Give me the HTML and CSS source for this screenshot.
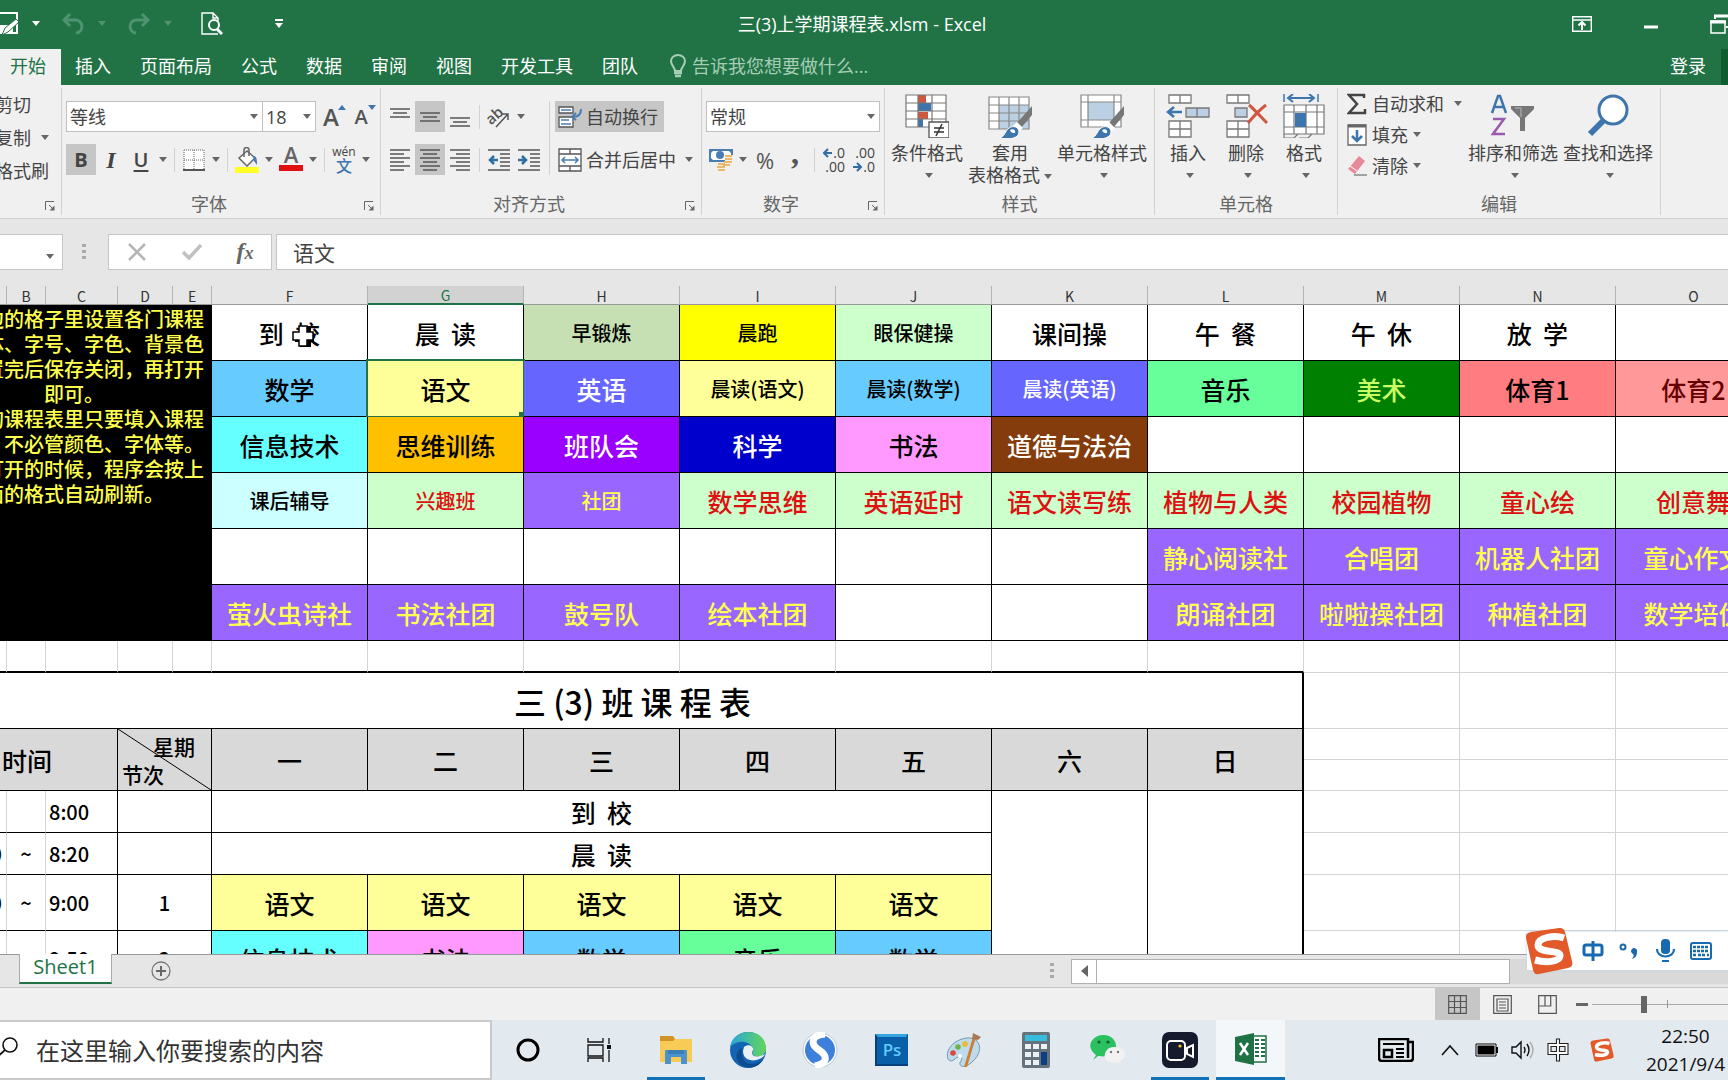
FILE: index.html
```
<!DOCTYPE html>
<html lang="zh-CN">

<head>
    <title>三(3)上学期课程表.xlsm - Excel</title>
    <meta charset="utf-8" />
    <link rel="stylesheet" href="styles.css">
</head>

<body>
    <header class="titlebar">
        <div class="qat">
            <button class="qat-btn qat-save" aria-label="保存"><svg width="30" height="24" viewBox="0 0 30 24"><path d="M1 1h26v20H1z" fill="none" stroke="#fff" stroke-width="2"/><path d="M5 13h18v8H5z" fill="#fff"/><path d="M12 23l3-7 11-9 3 3-11 10z" fill="#fff" stroke="#217346"/></svg></button>
            <i class="caret white"></i>
            <button class="qat-btn qat-undo" aria-label="撤消"><svg width="22" height="22" viewBox="0 0 22 22"><path d="M8 1L2 7l6 6M2 7h11c9 0 9 12 1 13" fill="none" stroke="#4f9370" stroke-width="3"/></svg></button>
            <i class="caret dim"></i>
            <button class="qat-btn qat-undo" aria-label="恢复"><svg width="22" height="22" viewBox="0 0 22 22"><path d="M14 1l6 6-6 6M20 7H9C0 7 0 19 8 20" fill="none" stroke="#4f9370" stroke-width="3"/></svg></button>
            <i class="caret dim"></i>
            <button class="qat-btn qat-preview" aria-label="打印预览"><svg width="22" height="24" viewBox="0 0 22 24"><path d="M17 22H1V1h11l5 5v3M12 1v5h5" fill="none" stroke="#fff" stroke-width="1.4"/><circle cx="13" cy="13" r="5" fill="#217346" stroke="#fff" stroke-width="2"/><path d="M16 17l5 5" stroke="#fff" stroke-width="3"/></svg></button>
            <button class="qat-btn qat-more" aria-label="自定义快速访问工具栏"><i class="caret white"></i></button>
        </div>
        <h1 class="doc-title">三(3)上学期课程表.xlsm - Excel</h1>
        <div class="win-btns">
            <button aria-label="功能区显示选项"><svg width="20" height="16" viewBox="0 0 20 16"><path d="M.7.7h18.6v14.6H.7zM1 4h18" fill="none" stroke="#fff" stroke-width="1.4"/><path d="M10 14V6M6.500 9.500L10 6l3.500 3.500" fill="none" stroke="#fff" stroke-width="2"/></svg></button>
            <button aria-label="最小化"><svg width="16" height="16" viewBox="0 0 16 16"><path d="M1 11h14" stroke="#fff" stroke-width="3"/></svg></button>
            <button aria-label="还原"><svg width="22" height="20" viewBox="0 0 22 20"><path d="M5 5V2h16v11h-5" fill="none" stroke="#fff" stroke-width="2"/><path d="M1 7h14v12H1z" fill="none" stroke="#fff" stroke-width="1.500"/><path d="M4 2h17M0 8h16" stroke="#fff" stroke-width="3"/></svg></button>
        </div>
    </header>

    <nav class="tabs">
        <button class="tab active">开始</button>
        <button class="tab">插入</button>
        <button class="tab">页面布局</button>
        <button class="tab">公式</button>
        <button class="tab">数据</button>
        <button class="tab">审阅</button>
        <button class="tab">视图</button>
        <button class="tab">开发工具</button>
        <button class="tab">团队</button>
        <button class="tell-me"><svg width="16" height="24" viewBox="0 0 16 24"><path d="M5 17c0-4-4-5-4-10a7 6 0 0 1 14 0c0 5-4 6-4 10z" fill="none" stroke="#a6cdb5" stroke-width="2"/><path d="M4 19h8M5 22h6" stroke="#a6cdb5" stroke-width="2.500"/></svg>告诉我您想要做什么...</button>
        <button class="login">登录</button>
        <span class="share"></span>
    </nav>

    <section class="ribbon">
        <div class="group g-clip">
            <div class="clip-list">
                <button>剪切</button>
                <button>复制<i class="caret"></i></button>
                <button>格式刷</button>
            </div>
            <div class="group-label"><svg class="launch"><use href="#launch"/></svg></div>
        </div>

        <div class="group g-font">
            <div class="row">
                <span class="combo font-name"><select aria-label="字体"><option>等线</option></select></span>
                <span class="combo font-size"><select aria-label="字号"><option>18</option></select></span>
                <button class="ib letter">A<i class="tri-up"></i></button>
                <button class="ib letter small">A<i class="tri-down"></i></button>
            </div>
            <div class="row">
                <button class="ib on bold">B</button>
                <button class="ib italic">I</button>
                <button class="ib under">U</button>
                <button class="drop" aria-label="下划线"><i class="caret"></i></button>
                <i class="sep"></i>
                <button class="ib" aria-label="边框"><svg width="22" height="22" viewBox="0 0 22 22"><path d="M1 1h20v20H1z" fill="#fff"/><path d="M1 1h20v19M1 1v19M11 1v19M1 11h20" fill="none" stroke="#666" stroke-dasharray="1 1"/><path d="M0 21h22" stroke="#555" stroke-width="2"/></svg></button>
                <button class="drop" aria-label="边框选项"><i class="caret"></i></button>
                <i class="sep"></i>
                <button class="ib" aria-label="填充颜色"><svg width="24" height="26" viewBox="0 0 24 26"><path d="M4 11L12 4l8 7-8 8z" fill="#fff" stroke="#666" stroke-width="1.500"/><path d="M9 10V3a2.500 2.500 0 0 1 5 0v6" fill="none" stroke="#666" stroke-width="1.500"/><path d="M18 9c4 0 4 4 4 9l-3-4z" fill="#4a7db3"/><path d="M0 20h24v6H0z" fill="#ffff26"/></svg></button>
                <button class="drop" aria-label="填充颜色选项"><i class="caret"></i></button>
                <button class="ib font-color">A</button>
                <button class="drop" aria-label="字体颜色选项"><i class="caret"></i></button>
                <i class="sep"></i>
                <button class="ib pinyin"><span>wén</span><b>文</b></button>
                <button class="drop" aria-label="拼音选项"><i class="caret"></i></button>
            </div>
            <div class="group-label">字体<svg class="launch"><use href="#launch"/></svg></div>
        </div>

        <div class="group g-align">
            <div class="align-cols">
                <div class="align-left">
                    <div class="row">
                        <button class="ib" aria-label="顶端对齐"><svg width="20" height="26"><path d="M0 5h20M3 9h14M0 13h20" stroke="#555" stroke-width="1.300"/></svg></button>
                        <button class="ib on" aria-label="垂直居中"><svg width="20" height="26"><path d="M0 9h20M3 13h14M0 17h20" stroke="#555" stroke-width="1.300"/></svg></button>
                        <button class="ib" aria-label="底端对齐"><svg width="20" height="26"><path d="M0 14h20M3 18h14M0 22h20" stroke="#555" stroke-width="1.300"/></svg></button>
                        <i class="sep"></i>
                        <button class="ib" aria-label="方向"><svg width="24" height="26" viewBox="0 0 24 26"><text x="0" y="17" transform="rotate(-42 8 14)" font-size="15" font-weight="600" font-family="Open Sans" fill="#555">ab</text><path d="M9 23L21 10M15 10h6v6" fill="none" stroke="#555" stroke-width="1.500"/></svg></button>
                        <button class="drop" aria-label="方向选项"><i class="caret"></i></button>
                    </div>
                    <div class="row">
                        <button class="ib" aria-label="左对齐"><svg width="20" height="24"><path d="M0 2h20M0 6h14M0 10h20M0 14h14M0 18h20M0 22h14" stroke="#555" stroke-width="1.300"/></svg></button>
                        <button class="ib on" aria-label="居中"><svg width="20" height="24"><path d="M0 2h20M3 6h14M0 10h20M3 14h14M0 18h20M3 22h14" stroke="#555" stroke-width="1.300"/></svg></button>
                        <button class="ib" aria-label="右对齐"><svg width="20" height="24"><path d="M0 2h20M6 6h14M0 10h20M6 14h14M0 18h20M6 22h14" stroke="#555" stroke-width="1.300"/></svg></button>
                        <i class="sep"></i>
                        <button class="ib" aria-label="减少缩进量"><svg width="22" height="24"><path d="M0 2h22M12 6h10M12 10h10M12 14h10M12 18h10M0 22h22" stroke="#555" stroke-width="1.300"/><path d="M10 12H2M6 8l-4 4 4 4" fill="none" stroke="#2f6ea5" stroke-width="2.500"/></svg></button>
                        <button class="ib" aria-label="增加缩进量"><svg width="22" height="24"><path d="M0 2h22M12 6h10M12 10h10M12 14h10M12 18h10M0 22h22" stroke="#555" stroke-width="1.300"/><path d="M0 12h8M4 8l4 4-4 4" fill="none" stroke="#2f6ea5" stroke-width="2.500"/></svg></button>
                    </div>
                </div>
                <div class="align-right">
                    <div class="row">
                        <button class="tb on"><svg width="24" height="24" viewBox="0 0 24 24"><path d="M1 2h14v6H1zM1 12h14v10H1z" fill="#fff" stroke="#555" stroke-width="1.300"/><path d="M3 5h10M3 15h8M3 19h10" stroke="#4a7db3" stroke-width="1.500"/><path d="M23 4c0 6-3 8-8 8M18 8l-4 4 4 3" fill="none" stroke="#4a7db3" stroke-width="2"/></svg>自动换行</button>
                    </div>
                    <div class="row">
                        <button class="tb"><svg width="24" height="24" viewBox="0 0 24 24"><path d="M1 1h22v22H1zM1 6h22M1 18h22M12 1v5M12 18v5" fill="#fff" stroke="#555" stroke-width="1.300"/><path d="M4 12h16M7 9l-3 3 3 3M17 9l3 3-3 3" fill="none" stroke="#4a7db3" stroke-width="1.500"/></svg>合并后居中</button>
                        <button class="drop" aria-label="合并选项"><i class="caret"></i></button>
                    </div>
                </div>
            </div>
            <div class="group-label">对齐方式<svg class="launch"><use href="#launch"/></svg></div>
        </div>

        <div class="group g-num">
            <div class="row">
                <span class="combo num-format"><select aria-label="数字格式"><option>常规</option></select></span>
            </div>
            <div class="row">
                <button class="ib" aria-label="会计数字格式"><svg width="24" height="24" viewBox="0 0 24 24"><path d="M0 1h24v13H0z" fill="#4a7db3"/><path d="M4 3h16l2 2v5l-2 2H4l-2-2V5z" fill="#fff"/><circle cx="11" cy="7" r="4" fill="#4a7db3"/><path d="M16 7h8v10h-8zM9 14h9v9H9z" fill="#f0f0f0"/><path d="M16 8h7M16 11h7M15 14h8M9 16h7M14 17h7M8 19h8M9 22h7" stroke="#eab868" stroke-width="2"/></svg></button>
                <button class="drop" aria-label="会计格式选项"><i class="caret"></i></button>
                <button class="ib sign">%</button>
                <button class="ib comma">,</button>
                <i class="sep"></i>
                <button class="ib dec"><span><svg width="9" height="10"><path d="M9 5H2M5 1L1 5l4 4" fill="none" stroke="#2f6ea5" stroke-width="2"/></svg>.0</span><span>.00</span></button>
                <button class="ib dec"><span>.00</span><span><svg width="9" height="10"><path d="M0 5h7M4 1l4 4-4 4" fill="none" stroke="#2f6ea5" stroke-width="2"/></svg>.0</span></button>
            </div>
            <div class="group-label">数字<svg class="launch"><use href="#launch"/></svg></div>
        </div>

        <div class="group g-style">
            <div class="bigs">
                <button class="big w76"><svg width="44" height="44" viewBox="0 0 44 44"><path d="M1 1h40v32H1z" fill="#fff"/><path d="M13 1h8v8h-8zM13 18h10v7H13z" fill="#d0573f"/><path d="M13 9h13v8H13zM13 25h5v8h-5z" fill="#3f75ad"/><path d="M1 1h40v32H1zM1 9h40M1 17h40M1 25h40M13 1v32M27 1v32" fill="none" stroke="#777" stroke-width="1.200"/><path d="M24 28h20v16H24z" fill="#fff" stroke="#555" stroke-width="1.300"/><path d="M29 34h10M29 38h10M37 30l-6 12" stroke="#333" stroke-width="1.500"/></svg><span>条件格式</span><i class="caret"></i></button>
                <button class="big w90"><svg width="44" height="44" viewBox="0 0 44 44"><path d="M1 3h40v32H1z" fill="#fff"/><path d="M11 11h30v24H11z" fill="#bcd0e3"/><path d="M1 3h40v32H1zM1 11h40M1 19h40M1 27h40M11 3v32M21 3v32M31 3v32" fill="none" stroke="#888" stroke-width="1.200"/><use href="#brush"/></svg><span>套用</span><span>表格格式<i class="caret"></i></span></button>
                <button class="big w94"><svg width="44" height="44" viewBox="0 0 44 44"><path d="M1 1h40v32H1z" fill="#fff"/><path d="M8 8h26v18H8z" fill="#bcd0e3"/><path d="M1 1h40v32H1zM1 8h40M1 26h40M8 1v32M34 1v32" fill="none" stroke="#888" stroke-width="1.200"/><use href="#brush"/></svg><span>单元格样式</span><i class="caret"></i></button>
            </div>
            <div class="group-label">样式</div>
        </div>

        <div class="group g-cells">
            <div class="bigs">
                <button class="big w58"><svg width="44" height="44" viewBox="0 0 44 44"><path d="M3 1h22v8H3zM14 1v8M3 27h22v16H3zM3 35h22M14 27v16" fill="#fff" stroke="#777" stroke-width="1.300"/><path d="M20 14h23v9H20zM31 14v9" fill="#bcd0e3" stroke="#777" stroke-width="1.300"/><path d="M16 18H3M8 13l-6 5 6 5" fill="none" stroke="#3f75ad" stroke-width="2.500"/></svg><span>插入</span><i class="caret"></i></button>
                <button class="big w58"><svg width="44" height="44" viewBox="0 0 44 44"><path d="M3 1h22v8H3zM14 1v8M3 27h22v16H3zM3 35h22M14 27v16" fill="#fff" stroke="#777" stroke-width="1.300"/><path d="M11 14h12v9H11z" fill="#bcd0e3" stroke="#777" stroke-width="1.300"/><path d="M25 11c6 5 10 10 18 18M42 11C34 17 30 22 24 29" fill="none" stroke="#d0573f" stroke-width="3"/></svg><span>删除</span><i class="caret"></i></button>
                <button class="big w58"><svg width="44" height="44" viewBox="0 0 44 44"><path d="M2 0v8M36 0v8" stroke="#3f75ad" stroke-width="1.500"/><path d="M6 4h26M11 0L6 4l5 4M27 0l5 4-5 4" fill="none" stroke="#3f75ad" stroke-width="2"/><path d="M2 11h40v29H2z" fill="#fff"/><path d="M2 11h40v29H2zM2 18h40M2 33h40M12 11v29M24 11v29M35 11v29M2 40v4h10l4-4M17 44h9l4-4" fill="none" stroke="#777" stroke-width="1.200"/><path d="M13 19h11v14H13z" fill="#3f75ad"/></svg><span>格式</span><i class="caret"></i></button>
            </div>
            <div class="group-label">单元格</div>
        </div>

        <div class="group g-edit">
            <div class="bigs">
                <div class="smalls">
                    <button><svg width="20" height="22" viewBox="0 0 20 22"><path d="M17 5V2H2l8 9-8 9h16v-4" fill="none" stroke="#444" stroke-width="2.500"/></svg>自动求和<i class="caret wide"></i></button>
                    <button><svg width="20" height="22" viewBox="0 0 20 22"><path d="M1 1h18v20H1z" fill="#fff" stroke="#666" stroke-width="1.300"/><path d="M1 2h18" stroke="#666" stroke-width="3"/><path d="M10 6v11M5 12l5 5 5-5" fill="none" stroke="#3f75ad" stroke-width="2.500"/></svg>填充<i class="caret"></i></button>
                    <button><svg width="20" height="22" viewBox="0 0 20 22"><path d="M12 1l6 5-10 13-7-5z" fill="#e8899a"/><path d="M3 11l7 5" stroke="#fff" stroke-width="1"/><path d="M7 20h13" stroke="#555"/></svg>清除<i class="caret"></i></button>
                </div>
                <button class="big w94"><svg width="44" height="44" viewBox="0 0 44 44"><path d="M1 19L7 2h2l6 17M4 13h8" fill="none" stroke="#3f75ad" stroke-width="2.500"/><path d="M2 25h11L2 40h12" fill="none" stroke="#9b59b0" stroke-width="2.500"/><path d="M20 12h23v3l-9 9v13h-5V24l-9-9z" fill="#777"/><path d="M24 14h6v9" fill="none" stroke="#bbb"/></svg><span>排序和筛选</span><i class="caret"></i></button>
                <button class="big w96"><svg width="44" height="44" viewBox="0 0 44 44"><circle cx="27" cy="16" r="14" fill="#fff" stroke="#3f75ad" stroke-width="3"/><path d="M17 27L4 40" stroke="#3f75ad" stroke-width="6"/></svg><span>查找和选择</span><i class="caret"></i></button>
            </div>
            <div class="group-label">编辑</div>
        </div>
    </section>

    <section class="formula-bar">
        <button class="name-box" aria-label="名称框"><i class="caret"></i></button>
        <i class="dots"></i>
        <div class="fx-btns">
            <button aria-label="取消"><svg width="20" height="18"><path d="M2 1l16 16M18 1L2 17" stroke="#b5b5b5" stroke-width="2.500"/></svg></button>
            <button aria-label="输入"><svg width="20" height="18"><path d="M1 9l6 6L19 2" fill="none" stroke="#c0c0c0" stroke-width="3.500"/></svg></button>
            <button class="fx">f<small>x</small></button>
        </div>
        <input class="formula" aria-label="编辑栏" value="语文">
    </section>

    <main class="sheet">
        <table class="grid">
            <colgroup>
                <col class="c-a"><col class="c-b"><col class="c-c"><col class="c-d"><col class="c-b">
                <col><col><col><col><col><col><col><col><col><col>
            </colgroup>
            <thead>
                <tr><th>A</th><th>B</th><th>C</th><th>D</th><th>E</th><th>F</th><th class="sel">G</th><th>H</th><th>I</th><th>J</th><th>K</th><th>L</th><th>M</th><th>N</th><th>O</th></tr>
            </thead>
            <tbody>
                <tr class="r56 set">
                    <td class="note" colspan="5" rowspan="6">在右边的格子里设置各门课程<br>的字体、字号、字色、背景色<br>，设置完后保存关闭，再打开<br>即可。<br>下面的课程表里只要填入课程<br>名称，不必管颜色、字体等。<br>再次打开的时候，程序会按上<br>面的格式自动刷新。</td>
                    <td class="arrive">到  校<svg class="cursor" width="24" height="24" viewBox="0 0 24 24"><path d="M9 4h11v19H9zM4 9h19v9H4z" fill="#000"/><path d="M8 2h8v6h6v8h-6v6H8v-6H2V8h6z" fill="#fff" stroke="#000" stroke-width="1.500"/></svg></td>
                    <td>晨  读</td><td class="exercise">早锻炼</td><td class="run">晨跑</td><td class="eye">眼保健操</td><td>课间操</td><td>午  餐</td><td>午  休</td><td>放  学</td><td></td>
                </tr>
                <tr class="r56 set">
                    <td class="math">数学</td><td class="chinese picked">语文</td><td class="english">英语</td><td class="chinese s">晨读(语文)</td><td class="math s">晨读(数学)</td><td class="english s">晨读(英语)</td><td class="music">音乐</td><td class="art">美术</td><td class="pe1">体育1</td><td class="pe2">体育2</td>
                </tr>
                <tr class="r56 set">
                    <td class="it">信息技术</td><td class="think">思维训练</td><td class="meeting">班队会</td><td class="science">科学</td><td class="calli">书法</td><td class="moral">道德与法治</td><td></td><td></td><td></td><td></td>
                </tr>
                <tr class="r56 set">
                    <td class="tutor">课后辅导</td><td class="hobby s">兴趣班</td><td class="club s">社团</td><td class="hobby">数学思维</td><td class="hobby">英语延时</td><td class="hobby">语文读写练</td><td class="hobby">植物与人类</td><td class="hobby">校园植物</td><td class="hobby">童心绘</td><td class="hobby">创意舞</td>
                </tr>
                <tr class="r56 set">
                    <td></td><td></td><td></td><td></td><td></td><td></td><td class="club">静心阅读社</td><td class="club">合唱团</td><td class="club">机器人社团</td><td class="club">童心作文</td>
                </tr>
                <tr class="r56 set">
                    <td class="club">萤火虫诗社</td><td class="club">书法社团</td><td class="club">鼓号队</td><td class="club">绘本社团</td><td></td><td></td><td class="club">朗诵社团</td><td class="club">啦啦操社团</td><td class="club">种植社团</td><td class="club">数学培优</td>
                </tr>
                <tr class="r32 blank">
                    <td class="tb2"></td><td class="tb2"></td><td class="tb2"></td><td class="tb2"></td><td class="tb2"></td><td class="tb2"></td><td class="tb2"></td><td class="tb2"></td><td class="tb2"></td><td class="tb2"></td><td class="tb2"></td><td class="tb2"></td><td></td><td></td><td></td>
                </tr>
                <tr class="r56">
                    <td class="k end title" colspan="12">三 (3) 班 课 程 表</td><td></td><td></td><td></td>
                </tr>
                <tr class="r31">
                    <td class="k head" colspan="3" rowspan="2">时间</td>
                    <td class="k head corner" colspan="2" rowspan="2"><svg viewBox="0 0 93 61" preserveAspectRatio="none"><path d="M0 0l93 61" stroke="#000" fill="none"/></svg><span class="week">星期</span><span class="lesson">节次</span></td>
                    <td class="k head" rowspan="2">一</td><td class="k head" rowspan="2">二</td><td class="k head" rowspan="2">三</td><td class="k head" rowspan="2">四</td><td class="k head" rowspan="2">五</td><td class="k head" rowspan="2">六</td><td class="k head end" rowspan="2">日</td><td></td><td></td><td></td>
                </tr>
                <tr class="r31"><td></td><td></td><td></td></tr>
                <tr class="r42">
                    <td class="kb"></td><td class="kb"></td><td class="k time">8:00</td><td class="k" colspan="2"></td><td class="k" colspan="5">到  校</td><td class="k" rowspan="4"></td><td class="k end" rowspan="4"></td><td></td><td></td><td></td>
                </tr>
                <tr class="r42">
                    <td class="kb from">8:00</td><td class="kb num">~</td><td class="k time">8:20</td><td class="k" colspan="2"></td><td class="k" colspan="5">晨  读</td><td></td><td></td><td></td>
                </tr>
                <tr class="r56">
                    <td class="kb from">8:20</td><td class="kb num">~</td><td class="k time">9:00</td><td class="k num" colspan="2">1</td><td class="k chinese">语文</td><td class="k chinese">语文</td><td class="k chinese">语文</td><td class="k chinese">语文</td><td class="k chinese">语文</td><td></td><td></td><td></td>
                </tr>
                <tr class="r56">
                    <td class="kb from">9:10</td><td class="kb num">~</td><td class="k time">9:50</td><td class="k num" colspan="2">2</td><td class="k it">信息技术</td><td class="k calli">书法</td><td class="k math">数学</td><td class="k music">音乐</td><td class="k math">数学</td><td></td><td></td><td></td>
                </tr>
            </tbody>
        </table>
    </main>

    <div class="sheet-tabs">
        <button class="sheet-tab">Sheet1</button>
        <button class="add-sheet" aria-label="新工作表"><svg width="20" height="20"><circle cx="10" cy="10" r="9" fill="none" stroke="#777" stroke-width="1.300"/><path d="M10 5v10M5 10h10" stroke="#666" stroke-width="2"/></svg></button>
        <div class="hscroll">
            <i class="dots"></i>
            <button class="scroll-left" aria-label="向左滚动"><i></i></button>
            <div class="scroll-thumb"></div>
            <div class="scroll-track"></div>
        </div>
        <div class="ime">
            <svg class="ime-logo" width="48" height="48" viewBox="0 0 48 48"><path d="M6 5L34 1c4 0 5 1 6 4l7 29c1 4 0 6-4 7l-29 6c-4 1-5-1-6-4L1 11c0-4 1-5 5-6z" fill="#e25a29"/><path d="M39 11c-9-3-26-1-26 7 0 9 23 4 22 11-1 6-14 7-25 4" fill="none" stroke="#fff" stroke-width="7"/></svg>
            <button aria-label="中文输入"><svg width="22" height="22" viewBox="0 0 22 22"><rect x="2" y="5" width="18" height="10" rx="2" fill="none" stroke="#1769b0" stroke-width="3"/><path d="M11 1v20" stroke="#1769b0" stroke-width="3"/></svg></button>
            <button aria-label="中文标点"><svg width="22" height="22" viewBox="0 0 22 22"><circle cx="5" cy="7" r="2.500" fill="none" stroke="#1769b0" stroke-width="2"/><path d="M14 9a3 3 0 0 1 5 3c0 4-2 6-5 7 2-3 2-4 1-5a3 3 0 0 1-1-5z" fill="#1769b0"/></svg></button>
            <button aria-label="语音输入"><svg width="22" height="24" viewBox="0 0 22 24"><rect x="7" y="0" width="9" height="15" rx="4" fill="#1769b0"/><path d="M3 10c0 10 17 10 17 0" fill="none" stroke="#1769b0" stroke-width="2"/><path d="M8 22h7" stroke="#1769b0" stroke-width="2"/></svg></button>
            <button aria-label="软键盘"><svg width="22" height="18" viewBox="0 0 22 18"><rect x="1" y="1" width="20" height="16" rx="2" fill="none" stroke="#1769b0" stroke-width="2"/><path d="M3 5h16M3 9h16M3 13h3M8 13h7M17 13h2" stroke="#1769b0" stroke-width="2.500" stroke-dasharray="3 1"/></svg></button>
        </div>
    </div>

    <footer class="status">
        <button class="view on" aria-label="普通"><svg width="19" height="19"><path d="M.7.7h17.600v17.600H.7zM.7 6.500h17.600M.7 12.500h17.600M6.500.7v17.600M12.500.7v17.600" fill="none" stroke="#555" stroke-width="1.200"/></svg></button>
        <button class="view" aria-label="页面布局"><svg width="19" height="19"><path d="M.7.7h17.600v17.600H.7zM4 4h11v12H4zM6 7h7M6 10h7M6 13h7" fill="none" stroke="#555" stroke-width="1.200"/></svg></button>
        <button class="view" aria-label="分页预览"><svg width="19" height="19"><path d="M.7.7h17.600v17.600H.7zM.7 11h12V.7M7 .7V11" fill="none" stroke="#555" stroke-width="1.200"/></svg></button>
        <button class="zoom-out" aria-label="缩小"></button>
        <input class="zoom-range" type="range" aria-label="缩放" min="0" max="100" value="34">
    </footer>

    <div class="taskbar">
        <label class="search"><svg width="24" height="22" viewBox="0 0 24 22"><circle cx="15" cy="8" r="7" fill="none" stroke="#111" stroke-width="1.600"/><path d="M10 13l-9 8" stroke="#111" stroke-width="1.800"/></svg><input type="text" placeholder="在这里输入你要搜索的内容"></label>
        <button class="app" aria-label="Cortana"><svg width="24" height="24"><circle cx="12" cy="12" r="10" fill="none" stroke="#000" stroke-width="3"/></svg></button>
        <button class="app view-task" aria-label="任务视图"><svg width="26" height="24" viewBox="0 0 26 24"><path d="M1 0v4h15V0M1 7h15v11H1zM1 24v-4h15v4M22 0v6M22 12v12" fill="none" stroke="#111" stroke-width="1.300"/><path d="M20 7h4v4h-4z" fill="#111"/></svg></button>
        <button class="app open" aria-label="文件资源管理器"><svg width="34" height="30" viewBox="0 0 34 30"><path d="M1 2h12l3 2h17v23H1z" fill="#f8cb56"/><path d="M1 1h13l2 3-2 2H1z" fill="#d29322"/><path d="M6 29V16q0-1 1-1h20q1 0 1 1v13h-6v-7H12v7z" fill="#4b93cc"/><path d="M9 15h16v4H9z" fill="#3b7db5"/></svg></button>
        <button class="app" aria-label="Edge"><svg width="36" height="36" viewBox="0 0 36 36"><defs><linearGradient id="eg" x1="0" x2="1"><stop offset="0" stop-color="#2aa5dc"/><stop offset="1" stop-color="#63d65a"/></linearGradient></defs><circle cx="18" cy="18" r="18" fill="#1464b4"/><path d="M0 16C2-5 36-6 36 17c0 7-9 9-13 6-2-2 1-4 0-6-3-10-19-9-23-1z" fill="url(#eg)"/><path d="M12 20c0 14 12 14 21 8-6 9-18 10-24 3-5-6-2-13 3-15z" fill="#0d4c8f"/><path d="M14 15c5-4 10 0 9 3-1 2-2 4 1 6 4 1 8 0 11-2-3 8-22 10-22-3z" fill="#e8f0f6"/></svg></button>
        <button class="app" aria-label="搜狗浏览器"><svg width="36" height="36" viewBox="0 0 36 36"><circle cx="18" cy="18" r="17" fill="#fff" stroke="#bcc8d4"/><circle cx="18" cy="18" r="15" fill="#3f7fdc"/><path d="M23 2C9 3 8 12 17 18s9 13-4 16" fill="none" stroke="#fff" stroke-width="7"/></svg></button>
        <button class="app" aria-label="Photoshop"><svg width="34" height="34" viewBox="0 0 34 34"><path d="M0 1h33v32H0z" fill="#07417d"/><path d="M2 3h31v28H2z" fill="#0960a8"/><path d="M0 1h33l-2 3H3z" fill="#35a4dd"/><text x="17" y="23" text-anchor="middle" font-family="Open Sans" font-weight="600" font-size="17" fill="#62c9fb">Ps</text></svg></button>
        <button class="app" aria-label="画图"><svg width="36" height="36" viewBox="0 0 36 36"><path d="M2 27C-3 12 22 0 31 9c6 7 1 18-9 24-7 4-10-1-7-4 3-4-2-6-6-2-3 3-6 2-7 0z" fill="#bcdcee" stroke="#7897ab"/><circle cx="7" cy="21" r="2.800" fill="#d84a42"/><circle cx="12" cy="15" r="2.800" fill="#70b348"/><circle cx="19" cy="12" r="3" fill="#edba3d"/><circle cx="14" cy="24" r="2" fill="#fff"/><path d="M30 5l-9 30-3 0L27 5z" fill="#d27d35"/><path d="M27 1l8 4-3 3-6-1z" fill="#aa7955"/></svg></button>
        <button class="app" aria-label="计算器"><svg width="28" height="36" viewBox="0 0 28 36"><rect width="28" height="36" rx="2" fill="#66727c"/><path d="M3 3h22v6H3z" fill="#35bddb"/><path d="M3 12h6v5H3zM11 12h6v5h-6zM19 12h6v5h-6zM3 20h6v5H3zM11 20h6v5h-6zM3 28h6v5H3zM11 28h6v5h-6z" fill="#eef2f5"/><path d="M19 20h6v13h-6z" fill="#0b3f83"/></svg></button>
        <button class="app" aria-label="微信"><svg width="36" height="32" viewBox="0 0 36 32"><path d="M3 26l3-5C-7 11 5 0 14 1c13 0 18 18 2 21-4 1-6 0-8 0z" fill="#2bc160"/><path d="M31 30l-3-2c-18 4-16-15-4-15 13 0 14 10 6 14z" fill="#f2f2f2"/><circle cx="9" cy="8" r="1.600" fill="#115e2c"/><circle cx="18" cy="8" r="1.600" fill="#115e2c"/><circle cx="21" cy="18" r="1.200" fill="#777"/><circle cx="28" cy="18" r="1.200" fill="#777"/></svg></button>
        <button class="app open" aria-label="录屏"><svg width="36" height="36" viewBox="0 0 36 36"><rect width="36" height="36" rx="7" fill="#151a2c"/><rect x="5" y="9" width="18" height="19" rx="4" fill="none" stroke="#fff" stroke-width="2"/><path d="M25 16l6-3v12l-6-3z" fill="none" stroke="#fff" stroke-width="2"/><circle cx="18" cy="14" r="1.600" fill="#ffc327"/></svg></button>
        <button class="app current" aria-label="Excel"><svg width="32" height="32" viewBox="0 0 32 32"><path d="M18 3h13v26H18z" fill="#fff" stroke="#1f7244" stroke-width="1.500"/><path d="M20 7h4M26 7h4M20 11h4M26 11h4M20 15h4M26 15h4M20 19h4M26 19h4M20 23h4M26 23h4" stroke="#1f7244" stroke-width="2"/><path d="M0 4L19 0v32L0 28z" fill="#1f7244"/><path d="M5 10l8 12M13 10L5 22" stroke="#fff" stroke-width="2.500"/></svg></button>
        <div class="tray">
            <svg width="36" height="24" viewBox="0 0 36 24"><path d="M30 4h5v16q0 3-3 3H4q-3 0-3-3V1h29v19" fill="none" stroke="#000" stroke-width="2.500"/><path d="M5 6h21M18 11h8M18 15h8M18 19h8" stroke="#000" stroke-width="2"/><path d="M6 12h8v7H6z" fill="none" stroke="#000" stroke-width="2.500"/></svg>
            <svg class="chev" width="18" height="12"><path d="M1 11l8-9 8 9" fill="none" stroke="#111" stroke-width="1.600"/></svg>
            <svg width="24" height="14"><path d="M1 1h20v12H1z" fill="#fff" stroke="#000"/><path d="M2.500 2.500h17v9h-17zM21 4h2v6h-2z"/></svg>
            <svg width="24" height="20" viewBox="0 0 24 20"><path d="M1 7h4l5-5v16l-5-5H1z" fill="none" stroke="#111" stroke-width="1.400"/><path d="M13 7q2 3 0 6M16 4q4 6 0 12" fill="none" stroke="#111" stroke-width="1.400"/><path d="M19 2q6 8 0 16" fill="none" stroke="#aaa" stroke-width="1.400"/></svg>
            <svg width="22" height="24" viewBox="0 0 22 24"><path d="M9.500 1h3v4.500H21v11h-8.500V23h-3v-6.500H1v-11h8.500zM4 8.500v5h5.500v-5zM12.500 8.500v5H18v-5z" fill="#fff" stroke="#222" stroke-width="1.100"/></svg>
            <svg class="tray-ime" width="24" height="24" viewBox="0 0 48 48"><path d="M6 5L34 1c4 0 5 1 6 4l7 29c1 4 0 6-4 7l-29 6c-4 1-5-1-6-4L1 11c0-4 1-5 5-6z" fill="#e25a29"/><path d="M39 11c-9-3-26-1-26 7 0 9 23 4 22 11-1 6-14 7-25 4" fill="none" stroke="#fff" stroke-width="7"/></svg>
            <div class="clock"><time>22:50</time><time>2021/9/4</time></div>
        </div>
    </div>

    <svg class="defs" aria-hidden="true">
        <symbol id="launch" viewBox="0 0 10 10"><path d="M.5 9V.5H9M4 4l4 4" fill="none" stroke="#666"/><path d="M9.500 4.500v5h-5z" fill="#666"/></symbol>
        <g id="brush"><path d="M44 12v9L33 34l-5-4z" fill="#777"/><path d="M29 28l6 6-4 4-6-6z" fill="#fff"/><path d="M12 44c5-2 5-7 9-10 4-3 10-1 10 4 0 7-12 8-19 6z" fill="#3f75ad" stroke="#fff"/><path d="M22 36c3-2 6 0 5 3-2 0-4 0-5-3z" fill="#fff"/></g>
    </svg>
</body>

</html>
```
FILE: styles.css
```
* {
    box-sizing: border-box;
}
body {
    margin: 0;
    height: 100vh;
    overflow: hidden;
    display: flex;
    flex-direction: column;
    background-color: #e6e6e6;
    color: #444;
    font-family: "Open Sans", "Noto Sans CJK SC", sans-serif;
    font-size: 18px;
    line-height: 22px;
}
button, input, select {
    font: inherit;
    color: inherit;
    border: 0;
    padding: 0;
    margin: 0;
    background: none;
}
button {
    white-space: nowrap;
}
svg {
    display: block;
    flex: none;
}
.defs {
    position: absolute;
    width: 0;
    height: 0;
}

/* small drop-down triangle */
.caret {
    display: inline-block;
    flex: none;
    border: 4px solid transparent;
    border-top: 5px solid #666;
    border-bottom: 0;
}
.caret.white {
    border-top-color: #fff;
}
.caret.dim {
    border-top-color: #4f9370;
}
.dots {
    flex: none;
    width: 4px;
    height: 16px;
    background: repeating-linear-gradient(#aaa 0 3px, transparent 3px 6px);
}

/* title bar */
.titlebar {
    position: relative;
    flex: none;
    height: 49px;
    display: flex;
    align-items: center;
    justify-content: space-between;
    padding-bottom: 2px;
    background-color: #217346;
    color: #fff;
}
.qat {
    display: flex;
    align-items: center;
    height: 46px;
}
.qat-save {
    margin-left: -10px;
    margin-right: 12px;
}
.qat-undo {
    margin-left: 22px;
    margin-right: 14px;
}
.qat-preview {
    margin-left: 29px;
    margin-right: 52px;
}
.qat-more {
    display: flex;
    border-top: 2px solid #fff;
    padding-top: 2px;
}
.doc-title {
    position: absolute;
    left: 0;
    right: 4px;
    margin: 0;
    text-align: center;
    font-size: 18px;
    font-weight: 400;
    pointer-events: none;
}
.win-btns {
    display: flex;
    align-items: center;
    gap: 51px;
    margin-right: -4px;
    height: 46px;
}

/* ribbon tabs */
.tabs {
    flex: none;
    height: 36px;
    display: flex;
    align-items: stretch;
    background-color: #217346;
    color: #fff;
}
.tab {
    padding: 0 15px 2px 14px;
}
.tab.active {
    margin-left: -4px;
    background-color: #f0f0f0;
    color: #217346;
}
.tell-me {
    display: flex;
    align-items: center;
    gap: 6px;
    padding: 0 0 2px 17px;
    color: #a6cdb5;
}
.login {
    margin-left: auto;
    padding: 0 15px 2px;
}
.share {
    width: 7px;
    background-color: #0e5c2f;
}

/* ribbon */
.ribbon {
    flex: none;
    display: flex;
    height: 134px;
    padding: 3px 0;
    background-color: #f0f0f0;
    border-bottom: 1px solid #d0d0d0;
}
.group {
    flex: none;
    position: relative;
    display: flex;
    flex-direction: column;
    gap: 12px;
    padding: 13px 0 0 4px;
    border-right: 1px solid #d2d2d2;
}
.g-clip {
    width: 62px;
    padding-left: 0;
}
.g-font {
    width: 319px;
}
.g-align {
    width: 321px;
}
.g-num {
    width: 183px;
}
.g-style {
    width: 270px;
}
.g-cells {
    width: 183px;
}
.g-edit {
    width: 323px;
}
.group-label {
    position: absolute;
    left: 0;
    right: 24px;
    bottom: 0;
    text-align: center;
    color: #666;
}
.g-style .group-label,
.g-cells .group-label,
.g-edit .group-label {
    right: 0;
}
.launch {
    position: absolute;
    right: -18px;
    bottom: 4px;
    width: 10px;
    height: 10px;
}
.row {
    display: flex;
    align-items: center;
    height: 31px;
}
.ib {
    position: relative;
    width: 30px;
    height: 31px;
    display: flex;
    flex: none;
    align-items: center;
    justify-content: center;
}
.drop {
    width: 14px;
    height: 31px;
    display: flex;
    align-items: center;
    justify-content: center;
}
.on {
    background-color: #c6c6c6;
}
.sep {
    width: 1px;
    height: 24px;
    margin: 0 4px;
    background-color: #d2d2d2;
}
.combo {
    position: relative;
    height: 31px;
}
.combo select {
    width: 100%;
    height: 100%;
    padding: 0 3px;
    appearance: none;
    border: 1px solid #c0c0c0;
    background-color: #fff;
}
.combo::after {
    content: "";
    position: absolute;
    right: 5px;
    top: 13px;
    border: 4px solid transparent;
    border-top: 5px solid #666;
    border-bottom: 0;
    pointer-events: none;
}
.font-name {
    width: 197px;
}
.font-size {
    width: 54px;
    margin-left: -1px;
}
.num-format {
    width: 174px;
}
.letter {
    font-size: 24px;
    font-weight: 600;
    color: #555;
}
.letter.small {
    font-size: 20px;
}
.tri-up, .tri-down {
    position: absolute;
    top: 4px;
    right: 0;
    border: 4px solid transparent;
    border-top: 0;
    border-bottom: 5px solid #3f75ad;
}
.tri-down {
    border-bottom: 0;
    border-top: 5px solid #3f75ad;
}
.bold {
    font-size: 20px;
    font-weight: 700;
}
.italic {
    font-family: "Liberation Serif", serif;
    font-size: 24px;
    font-style: italic;
    font-weight: 700;
}
.under {
    font-size: 20px;
    font-weight: 600;
    text-decoration: underline;
    text-underline-offset: 3px;
}
.font-color {
    font-size: 22px;
    font-weight: 600;
    line-height: 20px;
    align-items: flex-start;
    background: linear-gradient(#e01010, #e01010) center 21px / 24px 6px no-repeat;
    color: #666;
}
.pinyin {
    flex-direction: column;
    font-size: 12px;
    line-height: 12px;
}
.pinyin b {
    font-size: 16px;
    line-height: 16px;
    font-weight: 500;
    color: #3f75ad;
}
.align-cols {
    display: flex;
}
.align-left, .align-right {
    display: flex;
    flex-direction: column;
    gap: 12px;
}
.align-left {
    width: 165px;
    border-right: 1px solid #d2d2d2;
}
.align-right {
    padding-left: 5px;
}
.tb {
    display: flex;
    align-items: center;
    gap: 4px;
    height: 31px;
    padding: 0 6px 0 3px;
}
.sign {
    font-size: 22px;
    color: #555;
}
.comma {
    font-family: "Liberation Serif", serif;
    font-size: 32px;
    font-weight: 700;
    line-height: 20px;
    padding-bottom: 14px;
    color: #555;
}
.dec {
    flex-direction: column;
    align-items: flex-end;
    padding-right: 4px;
    font-size: 14px;
    line-height: 14px;
}
.dec span {
    display: flex;
    align-items: center;
    gap: 1px;
}
.bigs {
    display: flex;
    margin-top: -13px;
}
.big {
    display: flex;
    flex-direction: column;
    align-items: center;
    padding-top: 6px;
    height: 104px;
}
.big svg {
    margin-bottom: 4px;
}
.big > .caret {
    margin: 9px 0 0 4px;
}
.big span .caret {
    margin: 0 0 3px 4px;
}
.w58 {
    width: 58px;
}
.w76 {
    width: 76px;
}
.w90 {
    width: 90px;
}
.w94 {
    width: 94px;
}
.w96 {
    width: 96px;
}
.smalls {
    width: 124px;
    padding-left: 5px;
    display: flex;
    flex-direction: column;
    align-items: flex-start;
}
.smalls button {
    display: flex;
    align-items: center;
    gap: 5px;
    height: 31px;
}
.caret.wide {
    margin-left: 5px;
}
.clip-list {
    display: flex;
    flex-direction: column;
    align-items: flex-start;
    margin: -13px 0 0 -5px;
}
.clip-list button {
    display: flex;
    align-items: center;
    gap: 10px;
    height: 33px;
}

/* formula bar */
.formula-bar {
    flex: none;
    display: flex;
    align-items: center;
    height: 67px;
    padding: 0 0 1px;
}
.name-box {
    width: 63px;
    height: 36px;
    padding-right: 8px;
    text-align: right;
    line-height: 16px;
    background-color: #fff;
    border: 1px solid #c6c6c6;
    border-left: 0;
}
.formula-bar .dots {
    margin: 0 22px 0 19px;
}
.fx-btns {
    display: flex;
    justify-content: space-around;
    align-items: center;
    width: 164px;
    height: 36px;
    background-color: #fff;
    border: 1px solid #c6c6c6;
}
.fx {
    font-family: "Liberation Serif", serif;
    font-style: italic;
    font-weight: 700;
    font-size: 24px;
    color: #666;
}
.fx small {
    font-size: 18px;
}
.formula {
    flex: 1;
    height: 36px;
    margin-left: 4px;
    padding-left: 16px;
    font-size: 21px;
    background-color: #fff;
    border: 1px solid #c6c6c6;
    border-right: 0;
}

/* cells */
.sheet {
    flex: 1;
    min-height: 0;
    overflow: hidden;
    background-color: #fff;
}
.grid {
    width: 1835px;
    margin-left: -63px;
    table-layout: fixed;
    border-collapse: separate;
    border-spacing: 0;
    font-family: "Noto Sans CJK SC", sans-serif;
    font-size: 25px;
    font-weight: 500;
    line-height: 28px;
    color: #000;
}
.c-a {
    width: 70px;
}
.c-b {
    width: 39px;
}
.c-c {
    width: 72px;
}
.c-d {
    width: 55px;
}
.grid th {
    height: 19px;
    padding: 2px 0 0;
    font-size: 14px;
    font-weight: 400;
    line-height: 16px;
    color: #333;
    background-color: #e6e6e6;
    border-right: 1px solid #b5b5b5;
    border-bottom: 1px solid #999;
}
.grid th.sel {
    padding-top: 1px;
    background-color: #d2d2d2;
    border-bottom: 2px solid #217346;
    color: #217346;
}
.grid td {
    position: relative;
    padding: 0;
    text-align: center;
    white-space: pre;
    border-right: 1px solid #d4d4d4;
    border-bottom: 1px solid #d4d4d4;
}
.r56 {
    height: 56px;
}
.r32 {
    height: 32px;
}
.r31 {
    height: 31px;
}
.r42 {
    height: 42px;
}
.grid .set td, .grid .k {
    border-color: #000;
}
.grid .kb {
    border-bottom-color: #000;
}
.grid .tb2 {
    border-bottom: 2px solid #000;
}
.grid .end {
    border-right: 2px solid #000;
}
.grid .note {
    padding: 1px 0 0;
    vertical-align: top;
    font-size: 20px;
    line-height: 25px;
    text-spacing-trim: space-all;
    background-color: #000;
    color: #ffff4d;
}
.grid .title {
    padding-left: 26px;
    font-size: 32px;
}
.grid .head {
    background-color: #d9d9d9;
}
.corner svg {
    position: absolute;
    inset: 0;
    width: 100%;
    height: 100%;
}
.corner span {
    display: block;
    font-size: 21px;
    line-height: 28px;
}
.week {
    padding-right: 16px;
    text-align: right;
}
.lesson {
    padding-left: 4px;
    text-align: left;
}
.grid .time, .grid .from, .grid .num {
    font-size: 20px;
}
.grid .time {
    padding-left: 3px;
    text-align: left;
}
.grid .from {
    padding-right: 4px;
    text-align: right;
}
.cursor {
    position: absolute;
    left: 79px;
    top: 19px;
}
.picked::after {
    content: "";
    position: absolute;
    inset: -2px;
    border: 2px solid #217346;
    background: linear-gradient(#217346, #217346) right bottom / 4px 4px no-repeat;
}
.grid .s, .grid .exercise, .grid .run, .grid .eye, .grid .tutor {
    font-size: 20px;
}
.exercise {
    background-color: #c6e0b4;
}
.run {
    background-color: #ffff00;
}
.eye {
    background-color: #ccffcc;
}
.math {
    background-color: #66ccff;
}
.chinese {
    background-color: #ffff99;
}
.english {
    background-color: #6666ff;
    color: #fff;
}
.music {
    background-color: #66ff99;
}
.art {
    background-color: #008000;
    color: #ccff66;
}
.pe1 {
    background-color: #ff7c80;
}
.pe2 {
    background-color: #ff9999;
    color: #660000;
}
.it {
    background-color: #66ffff;
}
.think {
    background-color: #ffc000;
}
.meeting {
    background-color: #9900ff;
    color: #fff;
}
.science {
    background-color: #0000cc;
    color: #fff;
}
.calli {
    background-color: #ff99ff;
}
.moral {
    background-color: #843c0c;
    color: #fff;
}
.tutor {
    background-color: #ccffff;
}
.hobby {
    background-color: #ccffcc;
    color: #dd1111;
}
.club {
    background-color: #9966ff;
    color: #ffff4d;
}

/* sheet tabs and scroll bar */
.sheet-tabs {
    position: relative;
    flex: none;
    display: flex;
    height: 34px;
    background-color: #e6e6e6;
    border-top: 1px solid #999;
    border-bottom: 1px solid #c6c6c6;
}
.sheet-tab {
    width: 93px;
    height: 30px;
    margin: -1px 0 0 19px;
    padding-bottom: 2px;
    font-size: 20px;
    background-color: #fff;
    border: 1px solid #aaa;
    border-top: 0;
    border-bottom: 2px solid #217346;
    color: #217346;
}
.add-sheet {
    margin-left: 39px;
}
.hscroll {
    display: flex;
    align-items: center;
    width: 678px;
    margin-left: auto;
}
.hscroll .dots {
    margin-right: 17px;
}
.scroll-left {
    display: flex;
    align-items: center;
    justify-content: center;
    width: 26px;
    height: 25px;
    background-color: #fff;
    border: 1px solid #b0b0b0;
}
.scroll-left i {
    border: 6px solid transparent;
    border-left: 0;
    border-right: 7px solid #666;
}
.scroll-thumb {
    flex: 1;
    height: 25px;
    background-color: #fff;
    border: 1px solid #b0b0b0;
    border-left: 0;
}
.scroll-track {
    width: 218px;
    height: 25px;
    background-color: #d9d9d9;
}

/* floating input method bar */
.ime {
    position: absolute;
    right: 0;
    bottom: 17px;
    display: flex;
    align-items: center;
    gap: 14px;
    height: 38px;
    padding-right: 16px;
    background-color: #fff;
    box-shadow: 0 0 3px #b9d7ee;
}
.ime-logo {
    margin: 0 -5px 0 -2px;
}

/* status bar */
.status {
    flex: none;
    display: flex;
    align-items: center;
    justify-content: flex-end;
    height: 32px;
    background-color: #f0f0f0;
}
.view {
    display: flex;
    align-items: center;
    justify-content: center;
    width: 45px;
    height: 32px;
}
.zoom-out {
    width: 12px;
    height: 3px;
    margin: 0 4px 0 6px;
    background-color: #666;
}
.zoom-range {
    width: 150px;
    height: 20px;
    margin-right: -14px;
    appearance: none;
    background: linear-gradient(#999, #999) 75px center / 1px 8px no-repeat, linear-gradient(#aaa, #aaa) center / 100% 1px no-repeat;
}
.zoom-range::-webkit-slider-thumb {
    appearance: none;
    width: 6px;
    height: 17px;
    background-color: #666;
}

/* taskbar */
.taskbar {
    flex: none;
    display: flex;
    height: 60px;
    background-color: #e2eaf0;
    color: #111;
}
.search {
    display: flex;
    align-items: center;
    width: 492px;
    background-color: #fff;
    border: 2px solid #c9c9c9;
    border-left: 0;
}
.search svg {
    margin: 0 0 4px -5px;
}
.search input {
    flex: 1;
    padding: 2px 0 0 17px;
    font-size: 24px;
    line-height: 32px;
    outline: 0;
}
.search input::placeholder {
    color: #333;
    opacity: 1;
}
.app {
    display: flex;
    align-items: center;
    justify-content: center;
    flex: none;
    width: 72px;
}
.view-task {
    margin-right: 4px;
}
.open {
    background: linear-gradient(#1272b8, #1272b8) center bottom / 58px 3px no-repeat;
}
.current {
    width: 69px;
    background-color: #f3f7f9;
    border-bottom: 3px solid #1272b8;
}
.tray {
    display: flex;
    align-items: center;
    gap: 12px;
    margin-left: auto;
}
.chev {
    margin: 0 4px 0 15px;
}
.tray-ime {
    margin-left: 9px;
}
.clock {
    display: flex;
    flex-direction: column;
    width: 85px;
    margin-left: 17px;
    text-align: center;
    font-size: 19px;
    line-height: 28px;
}
```
